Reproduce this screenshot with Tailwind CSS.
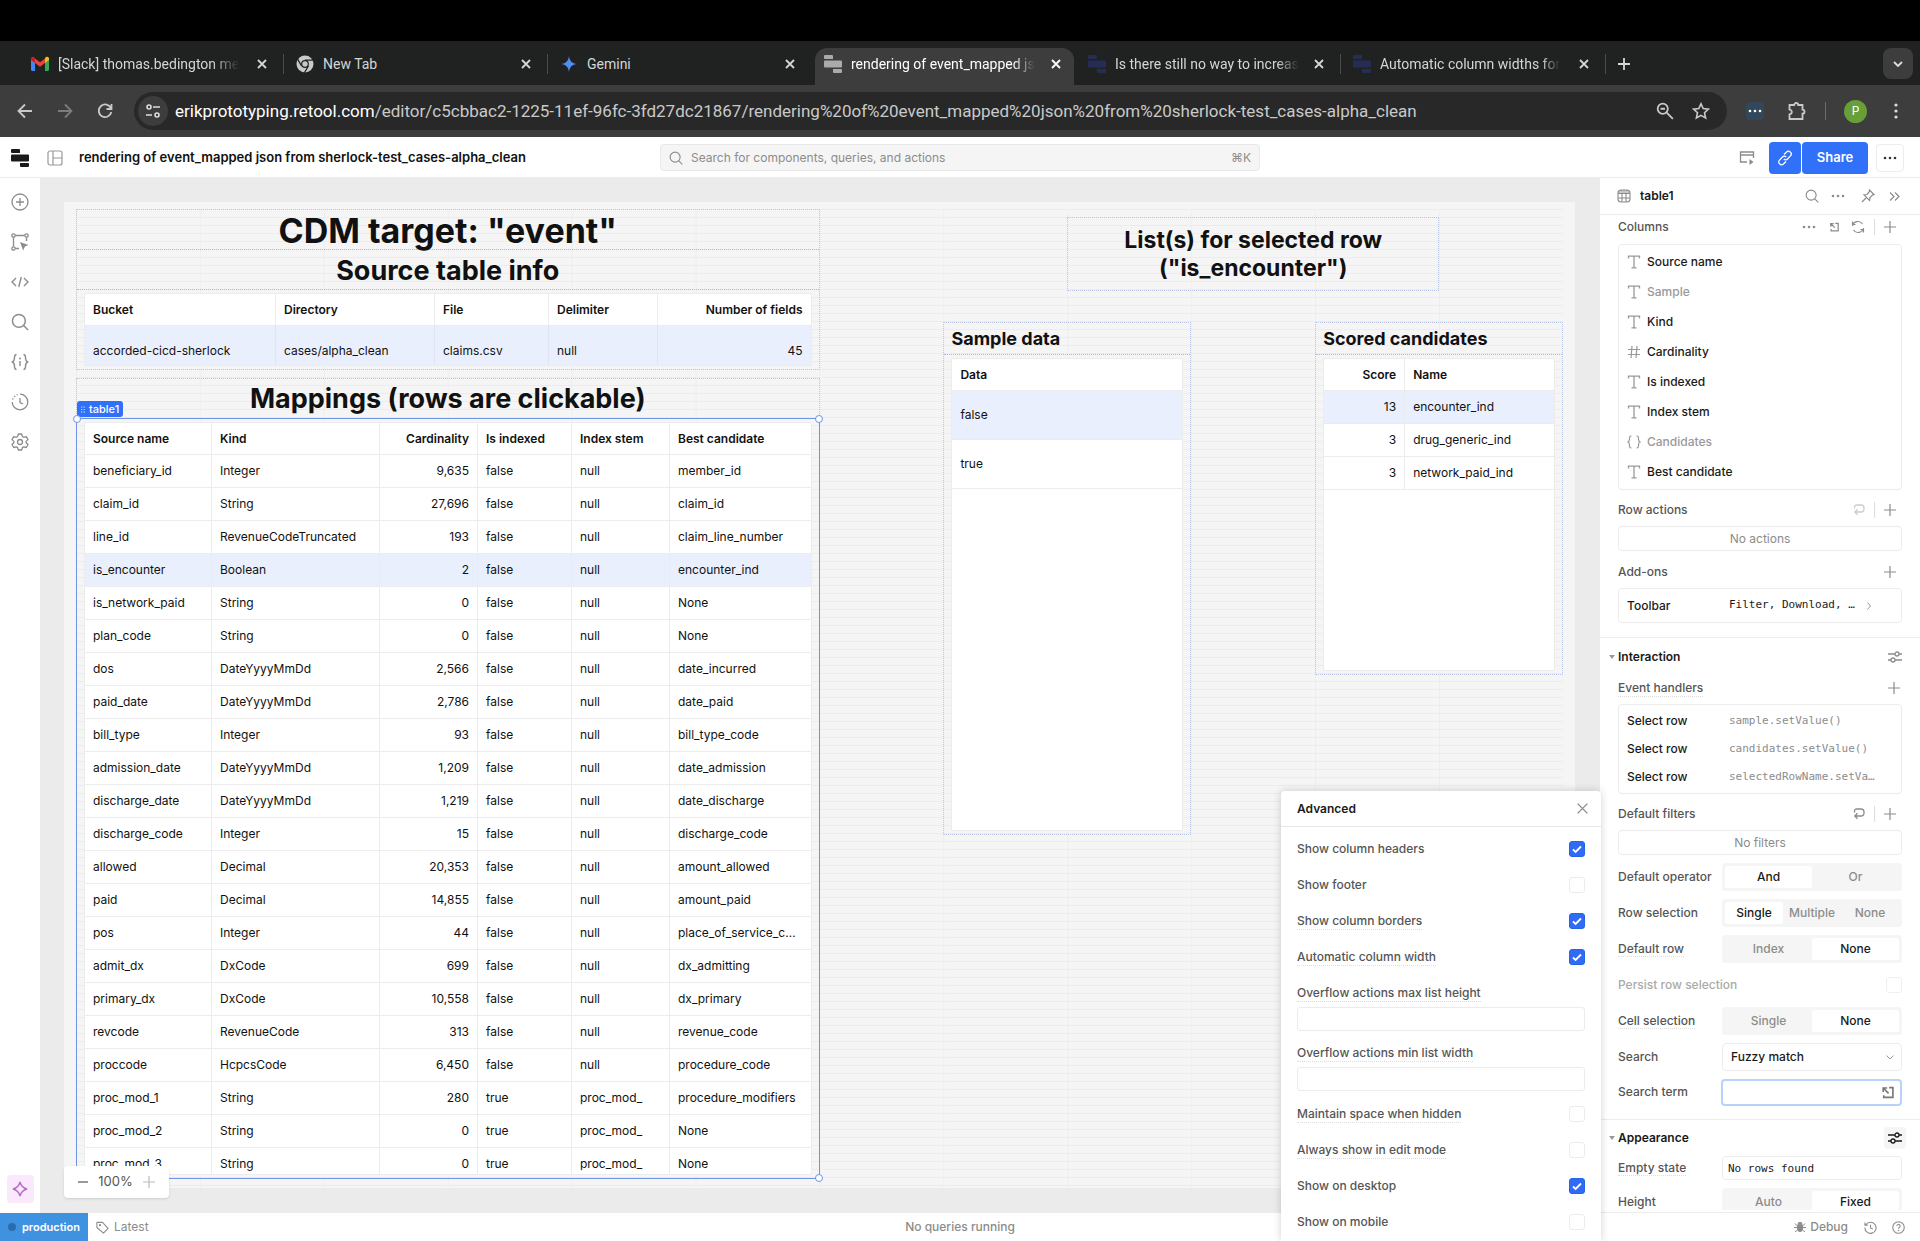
<!DOCTYPE html>
<html lang="en">
<head>
<meta charset="utf-8">
<meta name="viewport" content="width=device-width, initial-scale=1">
<title>rendering of event_mapped json from sherlock-test_cases-alpha_clean</title>
<script src="https://cdn.jsdelivr.net/npm/@tailwindcss/browser@4"></script>
</head>
<body class="flex h-screen flex-col overflow-hidden bg-white font-['Inter',sans-serif] text-xs text-[#111]">

<svg class="hidden" aria-hidden="true">
  <symbol id="i-x" viewBox="0 0 12 12"><path d="M2 2l8 8M10 2l-8 8" stroke="currentColor" fill="none" stroke-width="1.8"/></symbol>
  <symbol id="i-plus" viewBox="0 0 12 12"><path d="M6 0v12M0 6h12" stroke="currentColor" fill="none" stroke-width="1.2"/></symbol>
  <symbol id="i-dots" viewBox="0 0 14 4"><circle cx="2" cy="2" r="1.3" fill="currentColor"/><circle cx="7" cy="2" r="1.3" fill="currentColor"/><circle cx="12" cy="2" r="1.3" fill="currentColor"/></symbol>
  <symbol id="i-retool" viewBox="0 0 18 18"><path d="M1 0h7a1 1 0 0 1 1 1v3H1a1 1 0 0 1-1-1V1a1 1 0 0 1 1-1zM1 5.500h16a1 1 0 0 1 1 1v5a1 1 0 0 1-1 1H1a1 1 0 0 1-1-1v-5a1 1 0 0 1 1-1zM9 14h8a1 1 0 0 1 1 1v2a1 1 0 0 1-1 1h-7a1 1 0 0 1-1-1z" fill="currentColor"/></symbol>
  <symbol id="i-search" viewBox="0 0 16 16"><g stroke="currentColor" fill="none" stroke-width="1.300"><circle cx="7" cy="7" r="5.700"/><path d="M11.200 11.200l4 4"/></g></symbol>
  <symbol id="i-text" viewBox="0 0 14 14"><path d="M1.500 3.500V1.200h11v2.300M7 1.200v11.600M4.500 12.800h5" stroke="currentColor" fill="none" stroke-width="1.300"/></symbol>
  <symbol id="i-fx" viewBox="0 0 12 12"><path d="M7.500 1.500H11v9H2.500V8.500M2 5.500V1.800h3.700M2 1.800l5 5" stroke="currentColor" fill="none" stroke-width="1.500"/></symbol>
  <symbol id="i-loop" viewBox="0 0 12 12"><path d="M1.500 4.500V3a2 2 0 0 1 2-2H8a3 3 0 0 1 3 3v1a3 3 0 0 1-3 3H2M4.500 5.200L1.800 8l2.700 2.800" stroke="currentColor" fill="none" stroke-width="1.300"/></symbol>
  <symbol id="i-sliders" viewBox="0 0 14 12"><g stroke="currentColor" fill="none" stroke-width="1.300"><path d="M0 3h7M11 3h3M0 9h3M7 9h7"/><circle cx="9" cy="3" r="2"/><circle cx="5" cy="9" r="2"/></g></symbol>
  <symbol id="i-check" viewBox="0 0 16 16"><path d="M4 8.500l2.600 2.500L12 5.500" stroke="#fff" fill="none" stroke-width="1.800"/></symbol>
</svg>

<div class="h-[41px] shrink-0 bg-black"></div>

<!-- Tab strip -->
<nav class="flex h-11 shrink-0 items-stretch bg-[#202222] pt-[7px] pl-[19px] font-['Roboto',sans-serif] text-sm text-[#d4d6d6]" aria-label="Browser tabs">
  <div class="flex w-[265px] items-center gap-[9px] pb-[6px] pl-3">
    <svg class="size-[18px] shrink-0" viewBox="0 0 18 14"><path d="M0 2v10.500a1.500 1.500 0 0 0 1.500 1.500H4V5z" fill="#4285f4"/><path d="M14 5v9h2.500a1.500 1.500 0 0 0 1.500-1.500V2z" fill="#34a853"/><path d="M14 1.500V6l4-3V2a2 2 0 0 0-4-.500z" fill="#fbbc04"/><path d="M4 6V1.500l5 3.800 5-3.800V6L9 9.800z" fill="#ea4335"/><path d="M0 2v1l4 3V1.500A2 2 0 0 0 0 2z" fill="#c5221f"/></svg>
    <span class="whitespace-nowrap [mask-image:linear-gradient(to_right,#000_85%,transparent)]">[Slack] thomas.bedington me</span>
    <button class="ml-auto" aria-label="Close tab"><svg class="size-3"><use href="#i-x"/></svg></button>
    <i class="ml-[6px] h-5 w-px bg-[#4a4c4c]"></i>
  </div>
  <div class="flex w-[264px] items-center gap-[9px] pb-[6px] pl-3">
    <svg class="size-[18px] shrink-0" viewBox="0 0 18 18"><circle cx="9" cy="9" r="8.500" fill="#c8caca"/><circle cx="9" cy="9" r="3.900" fill="#202222"/><circle cx="9" cy="9" r="2.700" fill="#c8caca"/><path d="M9 5.100h8M5.600 11L1.600 4.200M12.400 11l-4 6.800" stroke="#202222" stroke-width="1.300"/></svg>
    <span>New Tab</span>
    <button class="ml-auto" aria-label="Close tab"><svg class="size-3"><use href="#i-x"/></svg></button>
    <i class="ml-[6px] h-5 w-px bg-[#4a4c4c]"></i>
  </div>
  <div class="flex w-[264px] items-center gap-[9px] pr-4 pb-[6px] pl-3">
    <svg class="size-[18px] shrink-0" viewBox="0 0 18 18"><path d="M9 1c.6 5 3 7.400 8 8-5 .6-7.400 3-8 8-.6-5-3-7.400-8-8 5-.6 7.400-3 8-8z" fill="#4f8df5"/></svg>
    <span>Gemini</span>
    <button class="ml-auto" aria-label="Close tab"><svg class="size-3"><use href="#i-x"/></svg></button>
  </div>
  <div class="mr-[2px] ml-[3px] flex w-[259px] items-center gap-[9px] rounded-t-xl bg-[#3d3d3d] pr-3 pb-[6px] pl-[9px] text-white">
    <svg class="size-[18px] shrink-0 text-[#aaa]"><use href="#i-retool"/></svg>
    <span class="whitespace-nowrap [mask-image:linear-gradient(to_right,#000_88%,transparent)]">rendering of event_mapped js</span>
    <button class="ml-auto" aria-label="Close tab"><svg class="size-3"><use href="#i-x"/></svg></button>
  </div>
  <div class="flex w-[265px] items-center gap-[9px] pb-[6px] pl-3">
    <svg class="size-[18px] shrink-0 text-[#272c55]"><use href="#i-retool"/></svg>
    <span class="whitespace-nowrap [mask-image:linear-gradient(to_right,#000_88%,transparent)]">Is there still no way to increas</span>
    <button class="ml-auto" aria-label="Close tab"><svg class="size-3"><use href="#i-x"/></svg></button>
    <i class="ml-[6px] h-5 w-px bg-[#4a4c4c]"></i>
  </div>
  <div class="flex w-[265px] items-center gap-[9px] pb-[6px] pl-3">
    <svg class="size-[18px] shrink-0 text-[#272c55]"><use href="#i-retool"/></svg>
    <span class="whitespace-nowrap [mask-image:linear-gradient(to_right,#000_90%,transparent)]">Automatic column widths for</span>
    <button class="ml-auto" aria-label="Close tab"><svg class="size-3"><use href="#i-x"/></svg></button>
    <i class="ml-[6px] h-5 w-px bg-[#4a4c4c]"></i>
  </div>
  <button class="ml-3 pb-[6px]" aria-label="New tab"><svg class="size-3" viewBox="0 0 12 12"><path d="M6 0v12M0 6h12" stroke="currentColor" stroke-width="1.800"/></svg></button>
  <button class="mr-[7px] mb-[6px] ml-auto grid w-[30px] place-items-center rounded-lg bg-[#3d3d3d]" aria-label="Search tabs"><svg class="h-[6px] w-[10px]" viewBox="0 0 10 6"><path d="M1 1l4 4 4-4" stroke="#ddd" fill="none" stroke-width="1.800"/></svg></button>
</nav>

<!-- Address bar -->
<div class="flex h-[52px] shrink-0 items-center bg-[#3d3d3d] text-[#c8caca]">
  <div class="flex w-[134px] items-center gap-6 pl-[17px]">
    <button aria-label="Back"><svg class="size-4" viewBox="0 0 16 16"><path d="M15 8H2M8 1.500L1.500 8 8 14.500" stroke="currentColor" fill="none" stroke-width="1.800"/></svg></button>
    <button class="text-[#7c7c7c]" aria-label="Forward"><svg class="size-4" viewBox="0 0 16 16"><path d="M1 8h13M8 1.500L14.500 8 8 14.500" stroke="currentColor" fill="none" stroke-width="1.800"/></svg></button>
    <button aria-label="Reload"><svg class="size-4" viewBox="0 0 16 16"><path d="M14 5.500A6.300 6.300 0 1 0 14.300 9M14.500 1v5h-5" stroke="currentColor" fill="none" stroke-width="1.800"/></svg></button>
  </div>
  <div class="flex h-[38px] flex-1 items-center rounded-full bg-[#282828] pr-[17px] pl-1">
    <button class="grid size-[30px] place-items-center rounded-full bg-[#3d3d3d]" aria-label="Site settings"><svg class="size-4" viewBox="0 0 16 16"><g stroke="#ddd" fill="none" stroke-width="1.600"><circle cx="4" cy="4" r="2"/><path d="M8 4h7M1 12h6"/><circle cx="12" cy="12" r="2"/></g></svg></button>
    <span class="ml-[7px] flex-1 font-['Roboto',sans-serif] text-[17px] whitespace-nowrap text-[#c8caca]"><span class="text-white">erikprototyping.retool.com</span>/editor/c5cbbac2-1225-11ef-96fc-3fd27dc21867/rendering%20of%20event_mapped%20json%20from%20sherlock-test_cases-alpha_clean</span>
    <button class="mr-[18px]" aria-label="Zoom"><svg class="size-[18px]" viewBox="0 0 16 16"><g stroke="currentColor" fill="none" stroke-width="1.600"><circle cx="6" cy="6" r="4.500"/><path d="M9.500 9.500l5.500 5.500M4 6h4"/></g></svg></button>
    <button aria-label="Bookmark"><svg class="size-[18px]" viewBox="0 0 18 18"><path d="M9 1.800l2.200 4.800 5.200.6-3.900 3.500 1.100 5.200L9 13.300l-4.600 2.600 1.100-5.200L1.600 7.200l5.200-.6z" stroke="currentColor" fill="none" stroke-width="1.600"/></svg></button>
  </div>
  <div class="flex w-[193px] items-center pr-[22px] pl-[19px]">
    <button class="grid size-[18px] place-items-center rounded bg-[#33475b] text-white" aria-label="Extension"><svg class="h-1 w-[14px]"><use href="#i-dots"/></svg></button>
    <button class="ml-[23px]" aria-label="Extensions"><svg class="size-[20px]" viewBox="0 0 20 20"><path d="M2.500 4h4.700a2 2 0 1 1 4 0h4.300v4.700a2 2 0 1 1 0 4v5.300h-13v-4.700a2.200 2.200 0 0 0 0-4.600z" stroke="currentColor" fill="none" stroke-width="1.800"/></svg></button>
    <span class="ml-[18px] h-[18px] w-px bg-[#6b6b6b]"></span>
    <span class="ml-[18px] grid size-[23px] place-items-center rounded-full bg-[#689f38] text-white">P</span>
    <button class="ml-auto" aria-label="Menu"><svg class="h-4 w-1" viewBox="0 0 4 16"><g fill="#ddd"><circle cx="2" cy="2" r="1.600"/><circle cx="2" cy="8" r="1.600"/><circle cx="2" cy="14" r="1.600"/></g></svg></button>
  </div>
</div>

<!-- Editor header -->
<header class="flex h-[41px] shrink-0 items-center border-b border-[#ececec] pt-px pr-4 pl-[11px]">
  <svg class="size-[18px] text-[#1a1a1a]"><use href="#i-retool"/></svg>
  <button class="ml-[18px] text-[#999]" aria-label="Toggle panel"><svg class="size-4" viewBox="0 0 16 16"><g stroke="currentColor" fill="none" stroke-width="1.200"><rect x="1" y="1" width="14" height="14" rx="2"/><path d="M6 1v14M6 8h9"/></g></svg></button>
  <h1 class="ml-4 w-[581px] text-[13px] font-semibold whitespace-nowrap">rendering of event_mapped json from sherlock-test_cases-alpha_clean</h1>
  <label class="flex h-[27px] w-[600px] items-center rounded border border-[#e8e8e8] bg-[#f5f5f5] px-2 text-[#8c8c8c]">
    <svg class="size-[14px]"><use href="#i-search"/></svg>
    <input class="ml-2 flex-1 outline-none placeholder:text-[#8c8c8c]" placeholder="Search for components, queries, and actions" aria-label="Search">
    <span>⌘K</span>
  </label>
  <button class="ml-auto text-[#8c8c8c]" aria-label="Preview"><svg class="size-4" viewBox="0 0 16 16"><path d="M14.500 8V2h-13v10H8M1.500 5h13" stroke="currentColor" fill="none" stroke-width="1.300"/><path d="M10.500 9v6l4-3z" fill="currentColor"/></svg></button>
  <button class="ml-[14px] grid h-8 w-8 place-items-center rounded bg-[#3170f9] text-white" aria-label="Copy link"><svg class="size-4" viewBox="0 0 16 16"><path d="M7 4.500l2.300-2.300a2.600 2.600 0 0 1 4.200 3.700L10.500 9a2.500 2.500 0 0 1-3.700 0M9 11.500l-2.300 2.300a2.600 2.600 0 0 1-4.200-3.700L5.500 7a2.500 2.500 0 0 1 3.700 0" stroke="currentColor" fill="none" stroke-width="1.300"/></svg></button>
  <button class="ml-px h-8 w-[66px] rounded bg-[#3170f9] text-[13px] font-semibold text-white">Share</button>
  <button class="ml-2 grid h-7 w-7 place-items-center rounded border border-[#ececec] text-[#333]" aria-label="More"><svg class="h-1 w-[14px]"><use href="#i-dots"/></svg></button>
</header>

<div class="flex min-h-0 flex-1">
  <!-- Left rail -->
  <aside class="flex w-10 shrink-0 flex-col items-center pt-[15px] pb-[10px] text-[#8c8c8c]">
    <div class="flex flex-col gap-[22px]">
      <button aria-label="Add"><svg class="size-[18px]" viewBox="0 0 18 18"><g stroke="currentColor" fill="none" stroke-width="1.300"><circle cx="9" cy="9" r="8"/><path d="M9 5v8M5 9h8"/></g></svg></button>
      <button aria-label="Components"><svg class="size-[18px]" viewBox="0 0 18 18"><g stroke="currentColor" fill="none" stroke-width="1.300"><circle cx="2.500" cy="2.500" r="1.700"/><circle cx="15.500" cy="2.500" r="1.700"/><circle cx="2.500" cy="15.500" r="1.700"/><path d="M4.500 2.500h9M2.500 4.500v9M15.500 4.500V8M4.500 15.500H8"/></g><path d="M9 9l8.500 3-3.600 1.600L12.200 17.500z" fill="currentColor"/></svg></button>
      <button aria-label="Code"><svg class="size-[18px]" viewBox="0 0 18 18"><path d="M5 5L1 9l4 4M13 5l4 4-4 4M10.300 4L7.700 14" stroke="currentColor" fill="none" stroke-width="1.400"/></svg></button>
      <button aria-label="Search"><svg class="size-[18px]"><use href="#i-search"/></svg></button>
      <button aria-label="State"><svg class="size-[18px]" viewBox="0 0 18 18"><path d="M5.500 1.500C3.500 1.500 3.500 3 3.500 4.500S3.500 8 1.500 9c2 1 2 3 2 4.500s0 3 2 3M12.500 1.500c2 0 2 1.500 2 3s0 3.500 2 4.500c-2 1-2 3-2 4.500s0 3-2 3M9 8v5" stroke="currentColor" fill="none" stroke-width="1.400"/><circle cx="9" cy="5.500" r="1" fill="currentColor"/></svg></button>
      <button aria-label="History"><svg class="size-[18px]" viewBox="0 0 18 18"><path d="M9 1.200a7.800 7.800 0 1 1-7.800 7.800M9 5v4.500l3 1.500" stroke="currentColor" fill="none" stroke-width="1.300"/><path d="M1.600 6.500a8 8 0 0 1 5-5" stroke="currentColor" fill="none" stroke-width="1.300" stroke-dasharray="1.300 1.800"/></svg></button>
      <button aria-label="Settings"><svg class="size-[18px]" viewBox="0 0 18 18"><g stroke="currentColor" fill="none" stroke-width="1.300" stroke-linejoin="round"><circle cx="9" cy="9" r="2.500"/><path d="M7.300 1h3.400l.7 2.500 1.300.8 2.600-.7 1.700 3-1.900 1.800v1.300l1.900 1.800-1.700 3-2.600-.7-1.300.8-.7 2.400H7.300l-.7-2.400-1.300-.8-2.600.7-1.700-3 1.900-1.800V8.400L1 6.600l1.700-3 2.600.7 1.300-.8z"/></g></svg></button>
    </div>
    <button class="mt-auto grid h-7 w-[27px] place-items-center rounded bg-[#fae8fd] text-[#b86cc6]" aria-label="Assistant"><svg class="size-4" viewBox="0 0 16 16"><path d="M8 1c1 4 3 6 7 7-4 1-6 3-7 7-1-4-3-6-7-7 4-1 6-3 7-7z" stroke="currentColor" fill="none" stroke-width="1.400"/></svg></button>
  </aside>

  <!-- Canvas -->
  <main class="relative flex min-w-0 flex-1 bg-[#ebebeb] pt-6 pr-[25px] pb-[25px] pl-6">
    <div class="flex-1 bg-[#f5f5f5] px-3 pt-[7px]">
      <div class="grid h-full grid-cols-12 bg-[image:linear-gradient(to_right,#eeeeef_1px,transparent_1px),linear-gradient(to_bottom,#ececed_1px,transparent_1px)] bg-[size:calc(100%/12)_8px]">

        <div class="col-span-6 flex flex-col gap-2 leading-none font-bold">
          <section class="border border-dotted border-[#bcc8ea]">
            <h2 class="flex h-10 items-center justify-center border-b border-dotted border-[#a9b8e8] pt-[2px] text-[34px]">CDM target: "event"</h2>
            <h3 class="flex h-10 items-center justify-center border-b border-dotted border-[#a9b8e8] pt-[2px] text-[27px]">Source table info</h3>
            <div class="px-[7px] py-[3px]">
              <div class="h-[73px] overflow-hidden rounded-xs border border-[#ececec] bg-white">
                <table class="w-full table-fixed border-separate border-spacing-0 text-left text-xs font-normal [&_td]:h-[49px] [&_td]:border-[#dfe5f5] [&_td]:px-2 [&_th]:h-8 [&_th]:border-b [&_th]:border-[#ececec] [&_th]:px-2 [&_th]:font-semibold [&_td:not(:last-child)]:border-r [&_th:not(:last-child)]:border-r">
                  <colgroup><col class="w-[191px]"><col class="w-[159px]"><col class="w-[114px]"><col class="w-[109px]"><col></colgroup>
                  <thead><tr><th>Bucket</th><th>Directory</th><th>File</th><th>Delimiter</th><th class="text-right">Number of fields</th></tr></thead>
                  <tbody><tr class="bg-[#e9effd]"><td>accorded-cicd-sherlock</td><td>cases/alpha_clean</td><td>claims.csv</td><td>null</td><td class="text-right">45</td></tr></tbody>
                </table>
              </div>
            </div>
          </section>

          <section class="border border-dotted border-[#bcc8ea] border-b-transparent">
            <h3 class="flex h-[39px] items-center justify-center text-[27px]">Mappings (rows are clickable)</h3>
            <div class="relative -mx-px border border-[#6f94e6] px-[7px] py-[3px]">
              <span class="absolute -top-[18px] left-0 flex h-4 items-center gap-1 rounded-[3px] bg-[#3170f9] px-1 text-[11px] font-medium text-white"><svg class="h-[7px] w-1" viewBox="0 0 5 8"><g fill="#fff"><circle cx="1" cy="1" r=".7"/><circle cx="4" cy="1" r=".7"/><circle cx="1" cy="4" r=".7"/><circle cx="4" cy="4" r=".7"/><circle cx="1" cy="7" r=".7"/><circle cx="4" cy="7" r=".7"/></g></svg>table1</span>
              <i class="absolute -top-1 -left-1 size-2 rounded-full border border-[#6f94e6] bg-white"></i>
              <i class="absolute -top-1 -right-1 size-2 rounded-full border border-[#6f94e6] bg-white"></i>
              <i class="absolute -right-1 -bottom-1 size-2 rounded-full border border-[#6f94e6] bg-white"></i>
              <div class="h-[753px] overflow-hidden rounded-xs border border-[#ececec] bg-white">
                <table class="w-full table-fixed border-separate border-spacing-0 text-left text-xs font-normal [&_td]:h-[33px] [&_td]:truncate [&_td]:border-b [&_td]:border-[#ececec] [&_td]:px-2 [&_td:nth-child(3)]:text-right [&_th]:h-8 [&_th]:border-b [&_th]:border-[#ececec] [&_th]:px-2 [&_th]:font-semibold [&_td:not(:last-child)]:border-r [&_th:not(:last-child)]:border-r">
                  <colgroup><col class="w-[127px]"><col class="w-[168px]"><col class="w-[98px]"><col class="w-[94px]"><col class="w-[98px]"><col></colgroup>
                  <thead><tr><th>Source name</th><th>Kind</th><th class="text-right">Cardinality</th><th>Is indexed</th><th>Index stem</th><th>Best candidate</th></tr></thead>
                  <tbody>
                    <tr><td>beneficiary_id</td><td>Integer</td><td>9,635</td><td>false</td><td>null</td><td>member_id</td></tr>
                    <tr><td>claim_id</td><td>String</td><td>27,696</td><td>false</td><td>null</td><td>claim_id</td></tr>
                    <tr><td>line_id</td><td>RevenueCodeTruncated</td><td>193</td><td>false</td><td>null</td><td>claim_line_number</td></tr>
                    <tr class="bg-[#e9effd]"><td>is_encounter</td><td>Boolean</td><td>2</td><td>false</td><td>null</td><td>encounter_ind</td></tr>
                    <tr><td>is_network_paid</td><td>String</td><td>0</td><td>false</td><td>null</td><td>None</td></tr>
                    <tr><td>plan_code</td><td>String</td><td>0</td><td>false</td><td>null</td><td>None</td></tr>
                    <tr><td>dos</td><td>DateYyyyMmDd</td><td>2,566</td><td>false</td><td>null</td><td>date_incurred</td></tr>
                    <tr><td>paid_date</td><td>DateYyyyMmDd</td><td>2,786</td><td>false</td><td>null</td><td>date_paid</td></tr>
                    <tr><td>bill_type</td><td>Integer</td><td>93</td><td>false</td><td>null</td><td>bill_type_code</td></tr>
                    <tr><td>admission_date</td><td>DateYyyyMmDd</td><td>1,209</td><td>false</td><td>null</td><td>date_admission</td></tr>
                    <tr><td>discharge_date</td><td>DateYyyyMmDd</td><td>1,219</td><td>false</td><td>null</td><td>date_discharge</td></tr>
                    <tr><td>discharge_code</td><td>Integer</td><td>15</td><td>false</td><td>null</td><td>discharge_code</td></tr>
                    <tr><td>allowed</td><td>Decimal</td><td>20,353</td><td>false</td><td>null</td><td>amount_allowed</td></tr>
                    <tr><td>paid</td><td>Decimal</td><td>14,855</td><td>false</td><td>null</td><td>amount_paid</td></tr>
                    <tr><td>pos</td><td>Integer</td><td>44</td><td>false</td><td>null</td><td>place_of_service_code</td></tr>
                    <tr><td>admit_dx</td><td>DxCode</td><td>699</td><td>false</td><td>null</td><td>dx_admitting</td></tr>
                    <tr><td>primary_dx</td><td>DxCode</td><td>10,558</td><td>false</td><td>null</td><td>dx_primary</td></tr>
                    <tr><td>revcode</td><td>RevenueCode</td><td>313</td><td>false</td><td>null</td><td>revenue_code</td></tr>
                    <tr><td>proccode</td><td>HcpcsCode</td><td>6,450</td><td>false</td><td>null</td><td>procedure_code</td></tr>
                    <tr><td>proc_mod_1</td><td>String</td><td>280</td><td>true</td><td>proc_mod_</td><td>procedure_modifiers</td></tr>
                    <tr><td>proc_mod_2</td><td>String</td><td>0</td><td>true</td><td>proc_mod_</td><td>None</td></tr>
                    <tr><td>proc_mod_3</td><td>String</td><td>0</td><td>true</td><td>proc_mod_</td><td>None</td></tr>
                  </tbody>
                </table>
              </div>
            </div>
          </section>
        </div>

        <div class="col-span-6 grid grid-cols-6 content-start items-start gap-y-[31px] pt-2 font-bold">
          <h2 class="col-span-3 col-start-3 border border-dotted border-[#bcc8ea] py-2 text-center text-[23px] leading-7">List(s) for selected row<br>("is_encounter")</h2>

          <section class="col-span-2 col-start-2 row-start-2 border border-dotted border-[#bcc8ea]">
            <h3 class="flex h-8 items-center border-b border-dotted border-[#a9b8e8] px-[7px] text-lg">Sample data</h3>
            <div class="px-[7px] py-[3px]">
              <div class="h-[473px] overflow-hidden rounded-xs border border-[#ececec] bg-white">
                <table class="w-full border-separate border-spacing-0 text-left text-xs font-normal [&_td]:h-[49px] [&_td]:border-b [&_td]:border-[#ececec] [&_td]:px-2 [&_th]:h-8 [&_th]:border-b [&_th]:border-[#ececec] [&_th]:px-2 [&_th]:font-semibold">
                  <thead><tr><th>Data</th></tr></thead>
                  <tbody><tr class="bg-[#e9effd]"><td>false</td></tr><tr><td>true</td></tr></tbody>
                </table>
              </div>
            </div>
          </section>

          <section class="col-span-2 col-start-5 row-start-2 border border-dotted border-[#bcc8ea]">
            <h3 class="flex h-8 items-center border-b border-dotted border-[#a9b8e8] px-[7px] text-lg">Scored candidates</h3>
            <div class="px-[7px] py-[3px]">
              <div class="h-[313px] overflow-hidden rounded-xs border border-[#ececec] bg-white">
                <table class="w-full table-fixed border-separate border-spacing-0 text-left text-xs font-normal [&_td]:h-[33px] [&_td]:border-b [&_td]:border-[#ececec] [&_td]:px-2 [&_td:first-child]:border-r [&_td:first-child]:text-right [&_th]:h-8 [&_th]:border-b [&_th]:border-[#ececec] [&_th]:px-2 [&_th]:font-semibold [&_th:first-child]:border-r">
                  <colgroup><col class="w-[81px]"><col></colgroup>
                  <thead><tr><th class="text-right">Score</th><th>Name</th></tr></thead>
                  <tbody><tr class="bg-[#e9effd]"><td>13</td><td>encounter_ind</td></tr><tr><td>3</td><td>drug_generic_ind</td></tr><tr><td>3</td><td>network_paid_ind</td></tr></tbody>
                </table>
              </div>
            </div>
          </section>
        </div>
      </div>
    </div>
    <div class="absolute bottom-[15px] left-6 flex h-8 w-[105px] items-center justify-center gap-[10px] rounded bg-white text-[13px] text-[#555] shadow-sm">
      <button aria-label="Zoom out"><svg class="h-[2px] w-[10px]" viewBox="0 0 10 2"><path d="M0 1h10" stroke="#777" stroke-width="1.500"/></svg></button>
      <span>100%</span>
      <button class="text-[#bbb]" aria-label="Zoom in"><svg class="size-3"><use href="#i-plus"/></svg></button>
    </div>
  </main>

  <!-- Inspector -->
  <aside class="flex w-80 shrink-0 flex-col border-b border-[#ececec] pb-[2px] font-medium text-[#555]">
    <div class="flex h-[37px] shrink-0 items-center border-b border-[#ececec] pr-5 pl-[17px] text-[#8c8c8c]">
      <svg class="size-[14px]" viewBox="0 0 14 14"><g stroke="currentColor" fill="none" stroke-width="1.100"><rect x="1" y="1" width="12" height="12" rx="3"/><path d="M1 4.500h12M1 9h12M5 4.500V13M9 4.500V13"/></g><path d="M1 4.500C1 2 2 1 4 1h6c2 0 3 1 3 3.500z" fill="currentColor" opacity=".5"/></svg>
      <h2 class="ml-[9px] font-semibold text-[#1a1a1a]">table1</h2>
      <button class="ml-auto" aria-label="Search properties"><svg class="size-[14px]"><use href="#i-search"/></svg></button>
      <button class="ml-3" aria-label="More"><svg class="h-1 w-[14px]"><use href="#i-dots"/></svg></button>
      <button class="ml-4" aria-label="Pin"><svg class="size-[14px]" viewBox="0 0 14 14"><path d="M8.500 1l4.500 4.500-1.300.3-2.700 2.700-.4 3L3 6l3-.500L8.500 2.500zM5 9l-4 4" stroke="currentColor" fill="none" stroke-width="1.200"/></svg></button>
      <button class="ml-[14px]" aria-label="Collapse"><svg class="h-[9px] w-[11px]" viewBox="0 0 11 9"><path d="M1 .5l4 4-4 4M6 .5l4 4-4 4" stroke="currentColor" fill="none" stroke-width="1.200"/></svg></button>
    </div>
    <div class="min-h-0 flex-1 overflow-hidden">
      <section class="border-b border-[#ececec] px-[18px] pb-[14px]">
        <div class="mb-[5px] flex h-6 items-center pr-[6px]">
          <h3 class="flex-1">Columns</h3>
          <div class="flex items-center text-[#8c8c8c]">
            <button aria-label="More"><svg class="h-1 w-[14px]"><use href="#i-dots"/></svg></button>
            <button class="ml-[13px]" aria-label="Edit dynamically"><svg class="size-[10px]"><use href="#i-fx"/></svg></button>
            <button class="ml-3" aria-label="Regenerate columns"><svg class="size-[14px]" viewBox="0 0 14 14"><path d="M1.500 6A5.500 5.500 0 0 1 11.500 4M12.500 8a5.500 5.500 0 0 1-10 2M1.500 1.500v3h3M12.500 12.500v-3h-3" stroke="currentColor" fill="none" stroke-width="1.200"/></svg></button>
            <span class="mx-[9px] h-4 w-px bg-[#ddd]"></span>
            <button aria-label="Add column"><svg class="size-3"><use href="#i-plus"/></svg></button>
          </div>
        </div>
        <ul class="rounded border border-[#ececec] px-2 py-[2px] text-[#1a1a1a] [&_svg]:size-[14px] [&_svg]:text-[#999] [&>li]:flex [&>li]:h-[30px] [&>li]:items-center [&>li]:gap-[6px]">
          <li><svg><use href="#i-text"/></svg>Source name</li>
          <li class="text-[#999]"><svg><use href="#i-text"/></svg>Sample</li>
          <li><svg><use href="#i-text"/></svg>Kind</li>
          <li><svg viewBox="0 0 14 14"><path d="M5 1L4 13M10 1L9 13M1 4.500h12M1 9.500h12" stroke="currentColor" fill="none" stroke-width="1.200"/></svg>Cardinality</li>
          <li><svg><use href="#i-text"/></svg>Is indexed</li>
          <li><svg><use href="#i-text"/></svg>Index stem</li>
          <li class="text-[#999]"><svg viewBox="0 0 14 14"><path d="M4.500 1C2 1 2.500 3 2.500 4.500S2.500 6.500.5 7c2 .5 2 1 2 2.500S2 13 4.500 13M9.500 1c2.500 0 2 2 2 3.500s0 2 2 2.500c-2 .5-2 1-2 2.500s.5 3.500-2 3.500" stroke="currentColor" fill="none" stroke-width="1.200"/></svg>Candidates</li>
          <li><svg><use href="#i-text"/></svg>Best candidate</li>
        </ul>

        <div class="mt-2 mb-1 flex h-6 items-center pr-[6px] text-[#8c8c8c]">
          <h3 class="flex-1 text-[#555]">Row actions</h3>
          <button class="text-[#ccc]" aria-label="Clear actions"><svg class="size-3"><use href="#i-loop"/></svg></button>
          <span class="mx-[9px] h-4 w-px bg-[#ddd]"></span>
          <button aria-label="Add action"><svg class="size-3"><use href="#i-plus"/></svg></button>
        </div>
        <p class="flex h-[25px] items-center justify-center rounded border border-[#ececec] font-normal text-[#8c8c8c]">No actions</p>

        <div class="mt-[9px] mb-1 flex h-6 items-center pr-[6px] text-[#8c8c8c]">
          <h3 class="flex-1 text-[#555]">Add-ons</h3>
          <button aria-label="Add add-on"><svg class="size-3"><use href="#i-plus"/></svg></button>
        </div>
        <div class="flex h-[35px] items-center rounded border border-[#ececec] px-2 text-[#1a1a1a]">
          <span class="w-[102px]">Toolbar</span>
          <span class="font-['DejaVu_Sans_Mono',monospace] text-[11px] font-normal">Filter, Download, …</span>
          <svg class="ml-3 h-2 w-1" viewBox="0 0 4 8"><path d="M.5.5L3.500 4 .5 7.500" stroke="#999" fill="none"/></svg>
        </div>
      </section>

      <section class="border-b border-[#ececec] px-[18px] pb-[10px]">
        <div class="-ml-[9px] flex h-[38px] items-center">
          <svg class="mr-[3px] h-1 w-[6px]" viewBox="0 0 6 4"><path d="M0 0h6L3 4z" fill="#999"/></svg>
          <h2 class="flex-1 font-semibold text-[#1a1a1a]">Interaction</h2>
          <button class="text-[#8c8c8c]" aria-label="Interaction settings"><svg class="h-3 w-[14px]"><use href="#i-sliders"/></svg></button>
        </div>
        <div class="mb-1 flex h-6 items-center justify-between pr-[2px]">
          <h3 class="border-b border-dotted border-[#ddd]">Event handlers</h3>
          <button class="text-[#8c8c8c]" aria-label="Add handler"><svg class="size-3"><use href="#i-plus"/></svg></button>
        </div>
        <ul class="rounded border border-[#ececec] px-2 py-[2px] text-[#1a1a1a] [&_code]:font-['DejaVu_Sans_Mono',monospace] [&_code]:text-[11px] [&_code]:font-normal [&_code]:text-[#8c8c8c] [&_span]:w-[102px] [&_span]:shrink-0 [&>li]:flex [&>li]:h-7 [&>li]:items-center">
          <li><span>Select row</span><code>sample.setValue()</code></li>
          <li><span>Select row</span><code>candidates.setValue()</code></li>
          <li><span>Select row</span><code class="w-[150px] truncate">selectedRowName.setValue()</code></li>
        </ul>

        <div class="mt-2 mb-1 flex h-6 items-center pr-[6px] text-[#8c8c8c]">
          <h3 class="flex-1 text-[#555]">Default filters</h3>
          <button aria-label="Clear filters"><svg class="size-3"><use href="#i-loop"/></svg></button>
          <span class="mx-[9px] h-4 w-px bg-[#ddd]"></span>
          <button aria-label="Add filter"><svg class="size-3"><use href="#i-plus"/></svg></button>
        </div>
        <p class="mb-1 flex h-[25px] items-center justify-center rounded border border-[#ececec] font-normal text-[#8c8c8c]">No filters</p>

        <fieldset class="flex h-9 items-center">
          <span class="w-[104px] shrink-0">Default operator</span>
          <div class="flex h-7 flex-1 rounded bg-[#f5f5f5] p-[3px] text-[#8c8c8c] [&>label]:relative [&>label]:grid [&>label]:flex-1 [&>label]:place-items-center [&>label]:rounded-[3px] [&>label:has(:checked)]:bg-white [&>label:has(:checked)]:text-[#1a1a1a]">
            <label><input class="sr-only" type="radio" name="op" checked>And</label><label><input class="sr-only" type="radio" name="op">Or</label>
          </div>
        </fieldset>
        <fieldset class="flex h-9 items-center">
          <span class="w-[104px] shrink-0">Row selection</span>
          <div class="flex h-7 flex-1 rounded bg-[#f5f5f5] p-[3px] text-[#8c8c8c] [&>label]:relative [&>label]:grid [&>label]:flex-1 [&>label]:place-items-center [&>label]:rounded-[3px] [&>label:has(:checked)]:bg-white [&>label:has(:checked)]:text-[#1a1a1a]">
            <label><input class="sr-only" type="radio" name="rowsel" checked>Single</label><label><input class="sr-only" type="radio" name="rowsel">Multiple</label><label><input class="sr-only" type="radio" name="rowsel">None</label>
          </div>
        </fieldset>
        <fieldset class="flex h-9 items-center">
          <span class="w-[104px] shrink-0"><span class="border-b border-dotted border-[#ddd]">Default row</span></span>
          <div class="flex h-7 flex-1 rounded bg-[#f5f5f5] p-[3px] text-[#8c8c8c] [&>label]:relative [&>label]:grid [&>label]:flex-1 [&>label]:place-items-center [&>label]:rounded-[3px] [&>label:has(:checked)]:bg-white [&>label:has(:checked)]:text-[#1a1a1a]">
            <label><input class="sr-only" type="radio" name="defrow">Index</label><label><input class="sr-only" type="radio" name="defrow" checked>None</label>
          </div>
        </fieldset>
        <label class="flex h-9 items-center justify-between text-[#aaa]">Persist row selection<input class="size-4 appearance-none rounded-[3px] border border-[#f0f0f0]" type="checkbox" disabled></label>
        <fieldset class="flex h-9 items-center">
          <span class="w-[104px] shrink-0"><span class="border-b border-dotted border-[#ddd]">Cell selection</span></span>
          <div class="flex h-7 flex-1 rounded bg-[#f5f5f5] p-[3px] text-[#8c8c8c] [&>label]:relative [&>label]:grid [&>label]:flex-1 [&>label]:place-items-center [&>label]:rounded-[3px] [&>label:has(:checked)]:bg-white [&>label:has(:checked)]:text-[#1a1a1a]">
            <label><input class="sr-only" type="radio" name="cellsel">Single</label><label><input class="sr-only" type="radio" name="cellsel" checked>None</label>
          </div>
        </fieldset>
        <div class="flex h-9 items-center">
          <label class="w-[104px] shrink-0" for="search-mode">Search</label>
          <div class="grid flex-1 items-center">
            <select id="search-mode" class="col-start-1 row-start-1 h-7 w-full appearance-none rounded border border-[#ececec] px-2 text-[#1a1a1a]"><option>Fuzzy match</option></select>
            <svg class="pointer-events-none col-start-1 row-start-1 mr-2 h-[5px] w-2 justify-self-end" viewBox="0 0 8 5"><path d="M.5.5L4 4 7.500.5" stroke="#999" fill="none"/></svg>
          </div>
        </div>
        <div class="flex h-[34px] items-center">
          <label class="w-[103px] shrink-0" for="search-term">Search term</label>
          <div class="flex h-[27px] min-w-0 flex-1 items-center rounded border-2 border-[#b9d2fb] pr-[6px]">
            <input id="search-term" class="min-w-0 flex-1 px-2 outline-none">
            <button class="text-[#777]" aria-label="Expand editor"><svg class="size-[13px]"><use href="#i-fx"/></svg></button>
          </div>
        </div>
      </section>

      <section class="px-[18px]">
        <div class="-ml-[9px] flex h-9 items-center">
          <svg class="mr-[3px] h-1 w-[6px]" viewBox="0 0 6 4"><path d="M0 0h6L3 4z" fill="#999"/></svg>
          <h2 class="flex-1 font-semibold text-[#1a1a1a]">Appearance</h2>
          <button class="-mr-1 grid size-[22px] place-items-center rounded bg-[#f5f5f5] text-[#1a1a1a]" aria-label="Appearance settings"><svg class="h-3 w-[14px]"><use href="#i-sliders"/></svg></button>
        </div>
        <div class="flex h-6 items-center">
          <label class="w-[104px] shrink-0" for="empty-state"><span class="border-b border-dotted border-[#ddd]">Empty state</span></label>
          <input id="empty-state" class="h-6 min-w-0 flex-1 rounded border border-[#ececec] px-[5px] font-['DejaVu_Sans_Mono',monospace] text-[11px] font-normal text-[#1a1a1a]" value="No rows found">
        </div>
        <fieldset class="mt-1 flex h-9 items-center">
          <span class="w-[104px] shrink-0">Height</span>
          <div class="flex h-7 flex-1 rounded bg-[#f5f5f5] p-[3px] text-[#8c8c8c] [&>label]:relative [&>label]:grid [&>label]:flex-1 [&>label]:place-items-center [&>label]:rounded-[3px] [&>label:has(:checked)]:bg-white [&>label:has(:checked)]:text-[#1a1a1a]">
            <label><input class="sr-only" type="radio" name="height">Auto</label><label><input class="sr-only" type="radio" name="height" checked>Fixed</label>
          </div>
        </fieldset>
      </section>
    </div>
  </aside>
</div>

<!-- Status bar -->
<footer class="grid h-7 shrink-0 grid-cols-[1fr_auto_1fr] items-center font-medium text-[#8c8c8c]">
  <div class="flex h-full items-center">
    <span class="flex h-full w-[88px] items-center gap-[6px] bg-[#3f92df] pl-2 text-[11px] font-semibold text-white"><i class="size-2 rounded-full bg-[#2b6cab]"></i>production</span>
    <svg class="ml-2 size-[13px]" viewBox="0 0 14 14"><g stroke="currentColor" fill="none" stroke-width="1.200"><path d="M1 1.500h6L13 8l-5 5-7-6z" stroke-linejoin="round"/><circle cx="4.300" cy="4.500" r=".6"/></g></svg>
    <span class="ml-[5px] font-normal">Latest</span>
  </div>
  <span>No queries running</span>
  <div class="flex items-center justify-end pr-[15px]">
    <svg class="size-3" viewBox="0 0 12 12"><path d="M3.500 4h5v4a2.500 2.500 0 0 1-5 0zM4 3.300a2 2 0 0 1 4 0zM0 6.500h3M9 6.500h3M1 2.500L3.500 5M11 2.500L8.500 5M1 11l2.500-2M11 11L8.500 9" fill="currentColor" stroke="currentColor"/></svg>
    <span class="ml-1">Debug</span>
    <svg class="ml-4 size-[13px]" viewBox="0 0 14 14"><path d="M2 4a6 6 0 1 1-1 3M1 1.500V4.500h3M7 4v3.500l2.500 1" stroke="currentColor" fill="none" stroke-width="1.200"/></svg>
    <svg class="ml-[15px] size-[13px]" viewBox="0 0 14 14"><circle cx="7" cy="7" r="6.200" stroke="currentColor" fill="none" stroke-width="1.200"/><path d="M5.200 5.500a1.800 1.800 0 1 1 2.600 1.600c-.6.3-.8.6-.8 1.200" stroke="currentColor" fill="none" stroke-width="1.200"/><circle cx="7" cy="10.300" r=".8" fill="currentColor"/></svg>
  </div>
</footer>

<!-- Advanced settings popover -->
<div class="absolute right-[319px] bottom-0 w-80 rounded-t bg-white pb-px font-medium text-[#555] shadow-[0_0_8px_rgba(0,0,0,0.18)]" role="dialog" aria-labelledby="adv-title">
  <div class="flex h-9 items-center justify-between border-b border-[#e6e6e6] px-4 text-[#8c8c8c]">
    <h2 id="adv-title" class="font-semibold text-[#1a1a1a]">Advanced</h2>
    <button class="-mr-1" aria-label="Close"><svg class="size-[13px]" viewBox="0 0 12 12"><path d="M1.500 1.500l9 9M10.500 1.500l-9 9" stroke="currentColor" fill="none" stroke-width="1.300"/></svg></button>
  </div>
  <div class="px-4 pt-1 [&_input[type=checkbox]]:size-4 [&_input[type=checkbox]]:appearance-none [&_input[type=checkbox]]:rounded-[3px] [&_input[type=checkbox]]:border [&_input[type=checkbox]]:border-[#ececec] [&_input[type=checkbox]:checked]:border-[#2563eb] [&_input[type=checkbox]:checked]:bg-[#2f6bf5] [&_.tick>*]:col-start-1 [&_.tick>*]:row-start-1 [&_.tick>svg]:size-4">
    <label class="flex h-9 items-center justify-between">Show column headers<span class="tick grid"><input type="checkbox" checked><svg><use href="#i-check"/></svg></span></label>
    <label class="flex h-9 items-center justify-between">Show footer<input type="checkbox"></label>
    <label class="flex h-9 items-center justify-between"><span class="border-b border-dotted border-[#ddd]">Show column borders</span><span class="tick grid"><input type="checkbox" checked><svg><use href="#i-check"/></svg></span></label>
    <label class="flex h-9 items-center justify-between"><span class="border-b border-dotted border-[#ddd]">Automatic column width</span><span class="tick grid"><input type="checkbox" checked><svg><use href="#i-check"/></svg></span></label>
    <div class="h-[60px] pt-1">
      <label class="flex h-7 items-center" for="max-h"><span class="border-b border-dotted border-[#ddd]">Overflow actions max list height</span></label>
      <input id="max-h" class="block h-6 w-full rounded-[3px] border border-[#ececec] px-2" type="text">
    </div>
    <div class="h-[61px] pt-1">
      <label class="flex h-7 items-center" for="min-w"><span class="border-b border-dotted border-[#ddd]">Overflow actions min list width</span></label>
      <input id="min-w" class="block h-6 w-full rounded-[3px] border border-[#ececec] px-2" type="text">
    </div>
    <label class="flex h-9 items-center justify-between"><span class="border-b border-dotted border-[#ddd]">Maintain space when hidden</span><input type="checkbox"></label>
    <label class="flex h-9 items-center justify-between"><span class="border-b border-dotted border-[#ddd]">Always show in edit mode</span><input type="checkbox"></label>
    <label class="flex h-9 items-center justify-between">Show on desktop<span class="tick grid"><input type="checkbox" checked><svg><use href="#i-check"/></svg></span></label>
    <label class="flex h-9 items-center justify-between">Show on mobile<input type="checkbox"></label>
  </div>
</div>
</body>
</html>
